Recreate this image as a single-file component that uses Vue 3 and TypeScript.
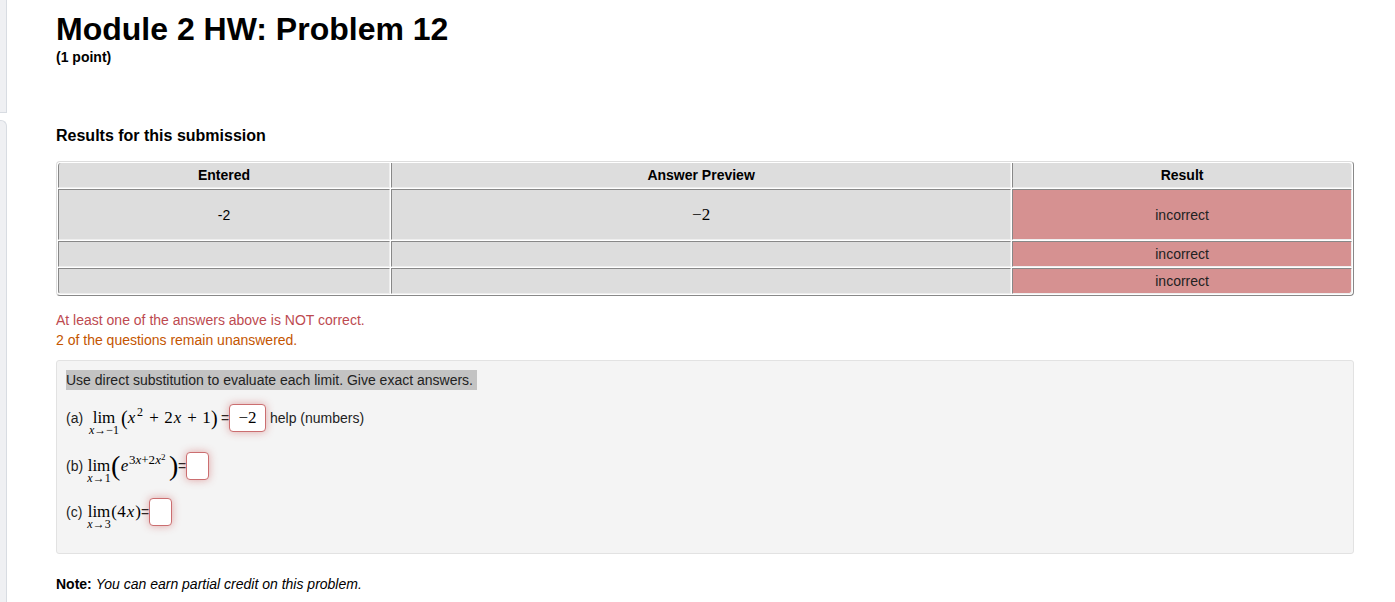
<script setup lang="ts">
interface ResultRow {
  entered: string
  preview: string
  result: string
}

const rows: ResultRow[] = [
  { entered: '-2', preview: '−2', result: 'incorrect' },
  { entered: '', preview: '', result: 'incorrect' },
  { entered: '', preview: '', result: 'incorrect' },
]
</script>

<template>
  <div class="page">
    <aside class="rail" aria-hidden="true">
      <div class="rail-top"></div>
      <div class="rail-bottom"></div>
    </aside>
    <main class="content">
      <h1>Module 2 HW: Problem 12</h1>
      <p class="points">(1 point)</p>
      <h2>Results for this submission</h2>

      <table class="results">
        <colgroup>
          <col class="col-entered" />
          <col class="col-preview" />
          <col class="col-result" />
        </colgroup>
        <thead>
          <tr>
            <th scope="col">Entered</th>
            <th scope="col">Answer Preview</th>
            <th scope="col">Result</th>
          </tr>
        </thead>
        <tbody>
          <tr v-for="(row, i) in rows" :key="i" :class="{ filled: row.entered }">
            <td>{{ row.entered }}</td>
            <td class="preview">{{ row.preview }}</td>
            <td class="wrong">{{ row.result }}</td>
          </tr>
        </tbody>
      </table>

      <p class="msg error">At least one of the answers above is NOT correct.</p>
      <p class="msg pending">2 of the questions remain unanswered.</p>

      <section class="problem">
        <p class="instruction"><span>Use direct substitution to evaluate each limit. Give exact answers.&nbsp;</span></p>

        <div class="part">
          <label for="ans-a">(a)</label>
          <span class="math">
            <span class="lim wide"><span>lim</span><span class="under"><i>x</i><span class="arrow">→</span>−1</span></span>
            <span class="paren mid">(</span>
            <i class="sym">x</i><span class="sup">2</span>
            <span class="op">+</span>
            <span class="sym">2</span><i class="sym">x</i>
            <span class="op">+</span>
            <span class="sym">1</span>
            <span class="paren mid">)</span>
          </span>
          <span class="equals spaced">=</span>
          <input id="ans-a" class="answer has-value" type="text" value="−2" />
          <span class="help">help (numbers)</span>
        </div>

        <div class="part">
          <label for="ans-b">(b)</label>
          <span class="math">
            <span class="lim"><span>lim</span><span class="under"><i>x</i><span class="arrow">→</span>1</span></span>
            <span class="paren tall">(</span>
            <i class="sym">e</i><span class="sup exponent">3<i>x</i>+2<i>x</i><span class="supsup">2</span></span>
            <span class="paren tall">)</span>
          </span>
          <span class="equals">=</span>
          <input id="ans-b" class="answer" type="text" />
        </div>

        <div class="part last">
          <label for="ans-c">(c)</label>
          <span class="math">
            <span class="lim"><span>lim</span><span class="under"><i>x</i><span class="arrow">→</span>3</span></span>
            <span class="paren">(</span>
            <span class="sym">4</span><i class="sym">x</i>
            <span class="paren">)</span>
          </span>
          <span class="equals">=</span>
          <input id="ans-c" class="answer" type="text" />
        </div>
      </section>

      <p class="note"><strong>Note:</strong> <em>You can earn partial credit on this problem.</em></p>
    </main>
  </div>
</template>

<style>
body {
  background: #fff;
}
</style>

<style scoped>
.page {
  display: flex;
  min-height: 100vh;
  box-sizing: border-box;
  font: 14px/20px "Liberation Sans", Arial, sans-serif;
  color: #000;
}

.rail {
  display: flex;
  flex: none;
  flex-direction: column;
  gap: 7px;
  width: 7px;
}

.rail-top,
.rail-bottom {
  box-sizing: border-box;
  background: #eff0f3;
  border-right: 1px solid #d8dce2;
}

.rail-top {
  height: 113px;
  border-bottom: 1px solid #d8dce2;
}

.rail-bottom {
  flex: 1;
  border-top: 1px solid #d8dce2;
  border-top-right-radius: 6px;
}

.content {
  flex: 1;
  min-width: 0;
  padding: 11px 41px 0 49px;
}

h1,
h2,
p {
  margin: 0;
}

h1 {
  font-size: 32px;
  line-height: 36px;
}

.points {
  font-weight: bold;
}

h2 {
  margin: 59px 0 15px;
  font-size: 16px;
  line-height: 20px;
}

.results {
  width: 100%;
  table-layout: fixed;
  border: 1px solid;
  border-color: #ddd #888 #888 #ddd;
  border-radius: 4px;
  border-collapse: separate;
  border-spacing: 1px;
  text-align: center;
}

.col-entered {
  width: 25.7%;
}

.col-preview {
  width: 48%;
}

th,
td {
  height: 24px;
  padding: 0;
  background: #ddd;
  border: 1px solid;
  border-color: #888 #eee #eee #888;
  font-weight: normal;
}

th {
  border-top: 0;
  font-weight: bold;
}

thead th:first-child {
  border-top-left-radius: 3px;
}

thead th:last-child {
  border-top-right-radius: 3px;
}

tbody tr:last-child td:first-child {
  border-bottom-left-radius: 3px;
}

tbody tr:last-child td:last-child {
  border-bottom-right-radius: 3px;
}

.filled td {
  height: 49px;
}

.preview {
  font-family: "Liberation Serif", serif;
  font-size: 17px;
}

td.wrong {
  background: #d69191;
  color: #222;
}

.msg {
  color: #bd4a50;
}

.results + .msg {
  margin-top: 14px;
}

.msg.pending {
  color: #c45500;
}

.problem {
  margin-top: 10px;
  padding: 9px 9px 19px;
  background: #f4f4f4;
  border: 1px solid #e2e2e2;
  border-radius: 3px;
  color: #222;
}

.instruction {
  margin-bottom: 4px;
}

.instruction span {
  display: inline-block;
  background: #c3c3c3;
}

.part {
  display: flex;
  align-items: center;
  height: 48px;
}

.part.last {
  height: 44px;
}

.part label {
  width: 21px;
}

.math {
  display: flex;
  align-items: center;
  font: 17px/20px "Liberation Serif", serif;
  color: #000;
}

.lim {
  display: flex;
  flex-direction: column;
  align-items: center;
  width: 24px;
  margin-top: 10px;
  line-height: 14px;
}

.lim.wide {
  width: 34px;
}

.under {
  display: flex;
  justify-content: center;
  font-size: 12px;
  line-height: 10px;
}

.arrow {
  font-size: 12px;
}

.sym {
  width: 9px;
  text-align: center;
}

.op {
  width: 20px;
  text-align: center;
}

.sup {
  align-self: flex-start;
  width: 8px;
  font-size: 12px;
  line-height: 22px;
  text-align: center;
}

.exponent {
  display: flex;
  width: 40px;
  font-size: 13px;
}

.supsup {
  font-size: 9px;
  line-height: 16px;
}

.paren {
  width: 6px;
  text-align: center;
}

.paren.mid {
  font-size: 20px;
}

.paren.tall {
  width: 9px;
  font-size: 28px;
}

.equals {
  width: 8px;
}

.equals.spaced {
  margin-left: 4px;
}

.answer {
  box-sizing: border-box;
  width: 23px;
  height: 28px;
  padding: 0;
  background: #fff;
  border: 1px solid #cb6e70;
  border-radius: 4px;
  box-shadow: 0 0 8px rgba(200, 70, 70, 0.45);
  font: 17px/20px "Liberation Serif", serif;
  text-align: center;
  color: #000;
  outline: none;
}

.answer.has-value {
  width: 37px;
}

.help {
  margin-left: 4px;
}

.note {
  margin-top: 20px;
}
</style>
